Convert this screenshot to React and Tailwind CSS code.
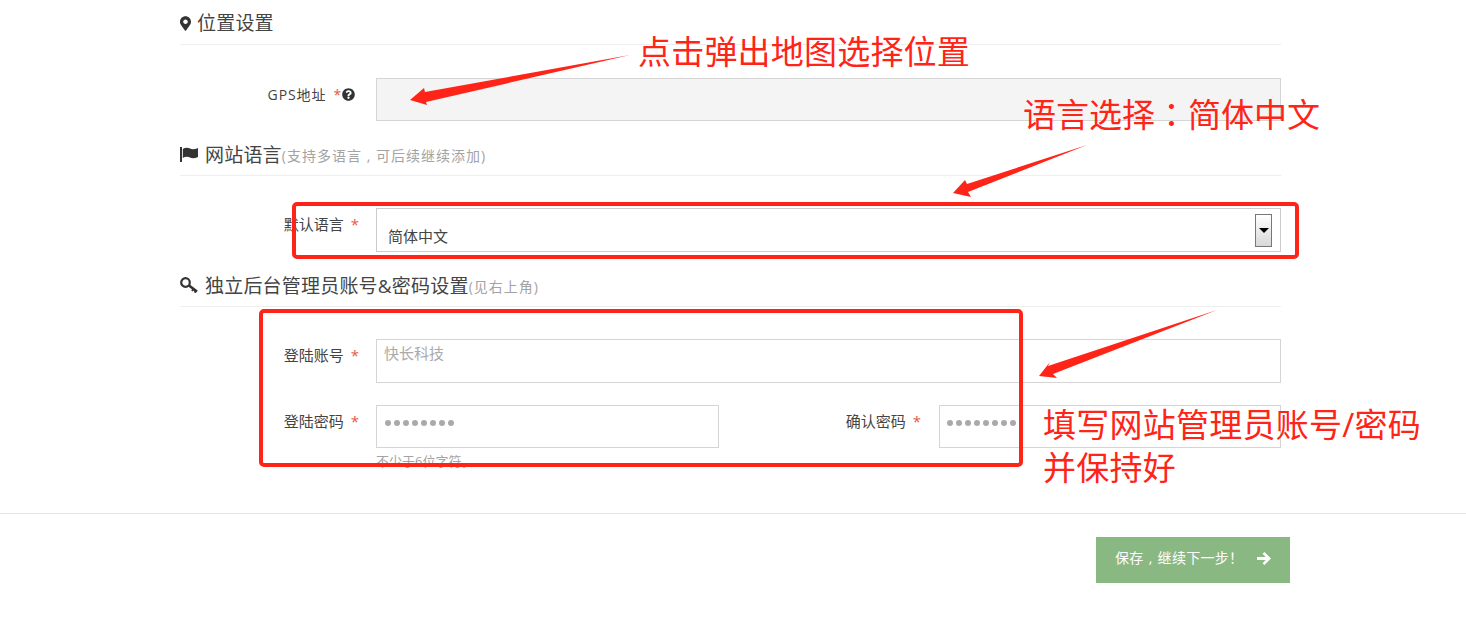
import React from "react";
import { FaMapMarkerAlt, FaQuestionCircle } from "react-icons/fa";

const Star = () => <span className="text-[#e9573f] ml-[7px]">*</span>;

const Comma = () => <span className="inline-block w-[14px] text-center">,</span>;

const FlagIcon = () => (
  <svg viewBox="0 0 18 15" className="w-[18px] h-[15px] mb-[1px]" fill="currentColor">
    <rect x="0" y="0" width="2" height="15" />
    <path d="M2.8 2 C5 .6 8 .4 10 1.6 C12 2.8 15 2.6 18 1 L18 10 C15 11.6 12 11.8 10 10.6 C8 9.4 5 9.6 2.8 11 Z" />
  </svg>
);

const KeyIcon = () => (
  <svg viewBox="0 0 18 16" className="w-[18px] h-[16px] mb-[2px]" fill="none" stroke="currentColor">
    <circle cx="5.5" cy="5.5" r="4.3" strokeWidth="2.2" />
    <path d="M9 8.5 L17 14.5" strokeWidth="2.6" />
    <path d="M13.6 11.8 L12 14 M16 13.6 L14.6 15.6" strokeWidth="2" />
  </svg>
);

const ArrowIcon = () => (
  <svg viewBox="0 0 14 13" className="w-[14px] h-[13px]" fill="currentColor">
    <path d="M7.4 0 L14 6.5 L7.4 13 L5.6 11.2 L8.7 8.1 L0 8.1 L0 4.9 L8.7 4.9 L5.6 1.8 Z" />
  </svg>
);

const SectionTitle = ({ icon, title, note, className }) => (
  <div className={`flex items-end border-b border-[#eeeeee] ${className}`}>
    <span className="w-[25px] h-[28px] flex items-center text-[#333]">{icon}</span>
    <span className="text-[19px] leading-[28px] text-[#444] tracking-[0.2px]">{title}</span>
    {note && <span className="text-[14px] leading-[27px] text-[#a3a3a3] tracking-[1px]">{note}</span>}
  </div>
);

const Dots = () => (
  <div className="flex gap-[3px]">
    {[1, 2, 3, 4, 5, 6, 7, 8].map((n) => (
      <span key={n} className="w-[6px] h-[6px] rounded-full bg-[#aaaaaa]" />
    ))}
  </div>
);

const FieldLabel = ({ text, className }) => (
  <label className={`pt-[6px] text-right text-[15px] leading-[21px] ${className}`}>
    {text}
    <Star />
  </label>
);

const App = () => {
  return (
    <div className="relative w-full h-[617px] overflow-hidden bg-white font-['Open_Sans','Noto_Sans_CJK_SC',sans-serif] text-[14px] text-[#444]">
      <div className="ml-[180px] w-[1101px]">
        <SectionTitle
          className="h-[45px] pb-[7px]"
          icon={<FaMapMarkerAlt className="w-[11px] h-[15px]" />}
          title={<span className="-ml-[8px]">位置设置</span>}
        />
        <div className="flex mt-[33px]">
          <label className="w-[196px] pr-[21px] pt-[6px] text-right tracking-[0.9px] flex justify-end items-start">
            GPS地址
            <span className="text-[#e9573f] ml-[7px]">*</span>
            <FaQuestionCircle className="w-[13px] h-[13px] mt-[4px] text-[#333]" />
          </label>
          <div className="flex-1 h-[43px] bg-[#f4f4f4] border border-[#d5d5d5]" />
        </div>

        <SectionTitle
          className="h-[55px] pb-[6px]"
          icon={<FlagIcon />}
          title="网站语言"
          note={<>(支持多语言<Comma />可后续继续添加)</>}
        />
        <div className="flex mt-[32px]">
          <FieldLabel text="默认语言" className="w-[196px] pr-[17px]" />
          <div className="flex-1 h-[44px] border border-[#cccccc] flex items-end justify-between pl-[11px] pr-[8px]">
            <span className="text-[15px] leading-[30px]">简体中文</span>
            <span className="mb-[4px] w-[17px] h-[33px] border border-[#777] bg-gradient-to-b from-white to-[#d8d8d8] flex items-center justify-center">
              <span className="w-0 h-0 border-x-[5px] border-x-transparent border-t-[5px] border-t-black" />
            </span>
          </div>
        </div>

        <SectionTitle
          className="h-[55px] pb-[6px]"
          icon={<KeyIcon />}
          title="独立后台管理员账号&密码设置"
          note="(见右上角)"
        />
        <div className="flex mt-[32px]">
          <FieldLabel text="登陆账号" className="w-[196px] pr-[17px]" />
          <div className="flex-1 h-[44px] border border-[#d5d5d5] pl-[7px] pt-[2px] text-[15px] text-[#aaaaaa]">
            快长科技
          </div>
        </div>
        <div className="flex mt-[22px]">
          <div className="w-[539px] flex">
            <FieldLabel text="登陆密码" className="w-[196px] pr-[17px]" />
            <div className="flex-1">
              <div className="h-[43px] border border-[#d5d5d5] pl-[8px] pt-[14px]">
                <Dots />
              </div>
              <div className="h-[16px] mt-[3px] text-[13px] leading-[20px] text-[#a3a3a3]">不少于6位字符。</div>
            </div>
          </div>
          <div className="flex-1 flex">
            <FieldLabel text="确认密码" className="w-[220px] pr-[18px]" />
            <div className="flex-1 h-[43px] border border-[#d5d5d5] pl-[7px] pt-[14px]">
              <Dots />
            </div>
          </div>
        </div>
      </div>

      <div className="mt-[46px] border-t border-[#e5e5e5] flex justify-end pr-[176px] pt-[23px]">
        <button className="w-[194px] h-[46px] bg-[#8ab883] text-white flex items-center pl-[19px] pb-[5px] tracking-[0.3px]">
          <span>保存<Comma />继续下一步！</span>
          <span className="ml-[14px] mt-[1px]"><ArrowIcon /></span>
        </button>
      </div>

      {/* annotations drawn on top of the screenshot */}
      <div className="absolute left-[292px] top-[202px] w-[1007px] h-[57px] border-[4px] border-[#ff2418] rounded-[5px]" />
      <div className="absolute left-[259px] top-[309px] w-[764px] h-[158px] border-[4px] border-[#ff2418] rounded-[5px]" />
      <svg className="absolute inset-0 w-full h-full pointer-events-none" viewBox="0 0 1466 617">
        <polygon fill="#ff2418" points="630,55 425,92 424,88 410,100 427,105 426,102" />
        <polygon fill="#ff2418" points="1087,145 967,184 965,180 953,193 971,197 968,192" />
        <polygon fill="#ff2418" points="1217,310 1048,366 1050,362 1039,376 1057,378 1053,374" />
      </svg>
      <div className="absolute left-[638px] top-[30px] text-[33px] leading-[44px] tracking-[0.2px] text-[#ff2418] whitespace-nowrap">点击弹出地图选择位置</div>
      <div className="absolute left-[1023px] top-[91px] text-[33px] leading-[44px] text-[#ff2418] whitespace-nowrap">语言选择<span className="font-['Noto_Sans_CJK_TC']">：</span>简体中文</div>
      <div className="absolute left-[1043px] top-[403px] text-[33px] leading-[43px] tracking-[0.25px] text-[#ff2418] whitespace-nowrap">
        <div>填写网站管理员账号/密码</div>
        <div>并保持好</div>
      </div>
    </div>
  );
};

export default App;
